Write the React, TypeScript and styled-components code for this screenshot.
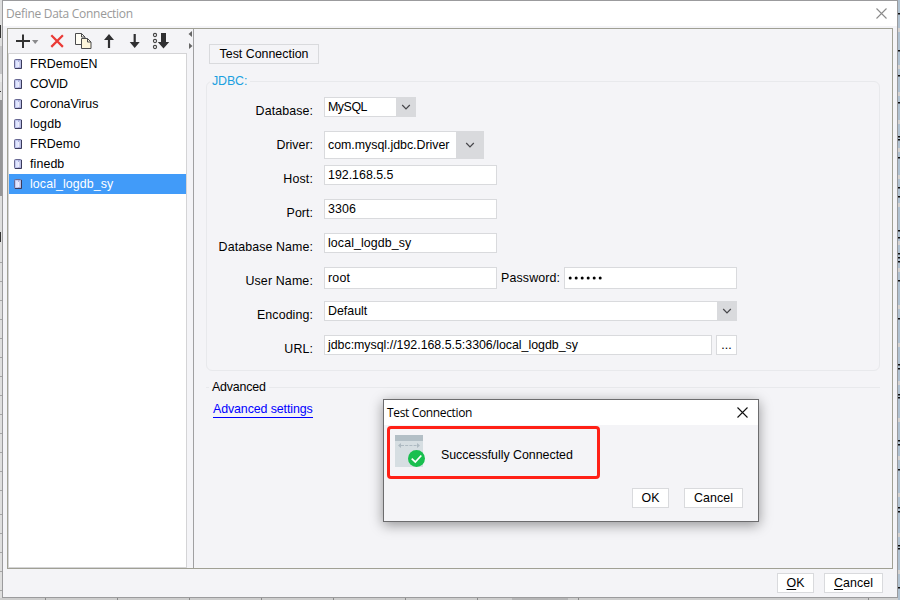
import React from "react";
import styled, { createGlobalStyle } from "styled-components";

const Global = createGlobalStyle`
  * { box-sizing: border-box; }
  body { margin: 0; overflow: hidden; background: #d2d2d2; }
  svg { display: block; flex: none; }
`;

const Desktop = styled.div`
  position: relative;
  width: 900px;
  height: 600px;
  overflow: hidden;
  padding: 0 2px 2px;
  background: #d0d0d0;
  font: 12.4px/20px "Liberation Sans", Arial, sans-serif;
  color: #000;
  white-space: nowrap;
`;

const Backdrop = styled.svg`
  position: absolute;
  left: 0;
  top: 0;
`;

const Window = styled.div`
  position: relative;
  display: flex;
  flex-direction: column;
  width: 896px;
  height: 598px;
  border: 1px solid #9b9b9d;
  background: #f4f4f7;
`;

const TitleBar = styled.div<{ $h: number; $muted?: boolean; $pad: string }>`
  display: flex;
  align-items: center;
  justify-content: space-between;
  flex: none;
  height: ${(p) => p.$h}px;
  padding: ${(p) => p.$pad};
  background: #fff;
  color: ${(p) => (p.$muted ? "#999" : "#000")};
  font-family: "Open Sans", sans-serif;
  font-size: 12px;
`;

const Txt = styled.span<{ $ls?: number }>`
  letter-spacing: ${(p) => p.$ls ?? 0}px;
`;

const Main = styled.div`
  display: flex;
  flex: none;
  width: 886px;
  height: 541px;
  margin: 2px 0 0 4px;
  border: 1px solid #a0a094;
`;

const Sidebar = styled.div`
  display: flex;
  flex-direction: column;
  width: 179px;
`;

const Toolbar = styled.div`
  flex: none;
  height: 24px;
`;

const List = styled.div`
  flex: 1;
  border: 1px solid #d4d4d6;
  background: #fff;
`;

const Item = styled.div<{ $selected?: boolean }>`
  display: flex;
  align-items: center;
  gap: 8px;
  height: 20px;
  padding-left: 5px;
  color: ${(p) => (p.$selected ? "#fff" : "#000")};
  background: ${(p) => (p.$selected ? "#419bf9" : "transparent")};
`;

const Splitter = styled.div`
  width: 7px;
  border-right: 1px solid #a0a0a2;
`;

const Content = styled.div`
  display: flex;
  flex-direction: column;
  align-items: flex-start;
  flex: 1;
  padding: 15px 0 0 12px;
`;

const Button = styled.button<{ $w: number; $plain?: boolean }>`
  flex: none;
  width: ${(p) => p.$w}px;
  height: 20px;
  margin: 0;
  padding: 0;
  border: 1px solid #d9dadd;
  background: ${(p) => (p.$plain ? "#f4f4f7" : "#fff")};
  font: inherit;
  line-height: 18px;
  color: #000;
`;

const TestButton = styled(Button)`
  margin-left: 3px;
`;

const Group = styled.fieldset`
  width: 674px;
  height: 299px;
  margin: 8px 0 0;
  padding: 0;
  min-width: 0;
  border: 1px solid #e8e9ec;
  border-radius: 6px;
`;

const Legend = styled.legend`
  height: 18px;
  margin: 0 0 0 3px;
  padding: 0 3px 0 2px;
  line-height: 18px;
  color: #1ba0e0;
`;

const Rows = styled.div`
  padding-top: 4px;
`;

const Row = styled.div`
  display: flex;
  height: 34px;
  align-items: flex-start;
`;

const Label = styled.label`
  width: 106px;
  margin-right: 11px;
  text-align: right;
  line-height: 34px;
`;

const Field = styled.div<{ $w: number; $h?: number }>`
  display: flex;
  justify-content: space-between;
  width: ${(p) => p.$w}px;
  height: ${(p) => p.$h ?? 20}px;
  margin-top: 3px;
  padding-left: 3px;
  border: 1px solid #d9dadd;
  background: #fff;
  line-height: ${(p) => (p.$h ?? 20) - 2}px;
`;

const DropButton = styled.div<{ $w: number }>`
  display: flex;
  align-items: center;
  justify-content: center;
  width: ${(p) => p.$w}px;
  background: #d9dadd;
`;

const PasswordLabel = styled.div`
  width: 67px;
  padding-left: 4px;
  margin-top: 3px;
  line-height: 22px;
`;

const Dots = styled.svg`
  margin-top: 8px;
`;

const MoreButton = styled(Button)`
  margin: 3px 0 0 4px;
`;

const Advanced = styled.div`
  display: flex;
  align-items: center;
  gap: 3px;
  width: 674px;
  height: 20px;
  margin-top: 6px;
`;

const Rule = styled.div<{ $w?: number }>`
  width: ${(p) => (p.$w ? `${p.$w}px` : "auto")};
  flex: ${(p) => (p.$w ? "none" : "1")};
  height: 1px;
  background: #e8e9ec;
`;

const Link = styled.a`
  margin: 3px 0 0 7px;
  height: 18px;
  line-height: 18px;
  color: #0000ff;
  border-bottom: 1px solid #0000ff;
`;

const Footer = styled.div`
  display: flex;
  justify-content: flex-end;
  gap: 10px;
  padding: 4px 14px 0 0;
`;

const Mnemonic = styled.span`
  text-decoration: underline;
  text-underline-offset: 2px;
  text-decoration-thickness: 1px;
`;

const Dialog = styled.div`
  position: absolute;
  left: 383px;
  top: 399px;
  display: flex;
  flex-direction: column;
  width: 376px;
  height: 123px;
  border: 1px solid #6c6c6e;
  background: #f4f4f7;
  box-shadow: 0 3px 12px rgba(0, 0, 0, 0.4);
`;

const Message = styled.div`
  display: flex;
  flex: none;
  align-items: flex-start;
  gap: 16px;
  width: 213px;
  height: 53px;
  margin: 1px 0 0 3px;
  padding: 6px 0 0 5px;
  border: 3px solid #ff2016;
  border-radius: 4px;
`;

const MessageText = styled(Txt)`
  margin-top: 10px;
`;

const DialogActions = styled.div`
  display: flex;
  justify-content: flex-end;
  gap: 15px;
  padding: 9px 15px 0 0;
`;

const CloseIcon = ({ color }: { color: string }) => (
  <svg width="11" height="11" viewBox="0 0 11 11">
    <path d="M.5 .5l10 10M10.5 .5l-10 10" stroke={color} strokeWidth="1.1" />
  </svg>
);

const Chevron = () => (
  <svg width="10" height="6" viewBox="0 0 10 6">
    <path d="M1.200 1l3.800 3.800L8.800 1" fill="none" stroke="#46464a" strokeWidth="1.2" />
  </svg>
);

const TableIcon = () => (
  <svg width="8" height="10" viewBox="0 0 8 10">
    <rect x=".5" y=".5" width="7" height="9" rx="1" fill="#a9aedb" stroke="#6a6a94" />
    <path d="M1.500 1.500h2.500v7h-2.500z" fill="#dfe5ff" />
    <path d="M5 3h1.500M5 5h1.500M5 7h1.500M4.500 3v5" stroke="#eef" />
    <path d="M7.500 1v8.500H1" fill="none" stroke="#3a3a5c" />
  </svg>
);

const ToolbarIcons = () => (
  <svg width="179" height="24" viewBox="8 29 179 24">
    <path d="M16 41h14M23 34.500v13.500" stroke="#333" strokeWidth="2" />
    <path d="M32 40h6.400l-3.200 4z" fill="#8a8a8c" />
    <path d="M51.300 35.300l11.600 11.600M62.900 35.300L51.300 46.900" stroke="#ea3a36" strokeWidth="2.200" />
    <g fill="#fff" stroke="#4b4b4d">
      <path d="M75.500 33.500h6l3.500 3.500v7.500h-9.500z" fill="#fffdf4" />
      <path d="M81.500 38.500h6l3.500 3.500v6.500h-9.500z" fill="#fdf5da" />
      <path d="M81.500 33.500v3.500h3.500M87.500 38.500v3.500h3.500" fill="none" />
    </g>
    <path d="M109 34l5 6h-3.900v8h-2.200v-8h-3.900z" fill="#303032" />
    <path d="M134.700 48l5-6h-3.900v-8h-2.200v8h-3.900z" fill="#303032" />
    <g fill="none" stroke="#444" strokeWidth="1.100">
      <circle cx="155" cy="35" r="1.600" />
      <circle cx="155" cy="41" r="1.600" />
      <circle cx="155" cy="47" r="1.600" />
    </g>
    <path d="M161 33h5v9h3.200l-5.700 6.500-5.700-6.500h3.200z" fill="#303032" />
  </svg>
);

const SplitArrows = () => (
  <svg width="6" height="24" viewBox="187 29 6 24">
    <path d="M192 31v6l-3.500-3z" fill="#666" />
    <path d="M189 43v6l3.500-3z" fill="#666" />
  </svg>
);

const SuccessIcon = () => (
  <svg width="30" height="33" viewBox="395 435 30 33">
    <path d="M395 435h28v32h-28z" fill="#d6dee2" />
    <path d="M395 435h28v6h-28z" fill="#b3bfc6" />
    <path d="M401 445.500h16" stroke="#aebac2" strokeDasharray="3 1.200" />
    <path d="M401 443v5l-3-2.500zM417 443v5l3-2.500z" fill="#aebac2" />
    <circle cx="416.500" cy="458.500" r="8.500" fill="#19bf4f" />
    <path d="M411.700 458.700l3.600 3.300 6-6.500" fill="none" stroke="#fff" strokeWidth="1.700" />
  </svg>
);

const bands = [30, 67, 94, 122, 150, 177, 205, 243, 270, 307, 345, 383, 420, 458, 495, 535, 572];
const marks = [13, 50, 75, 102, 136, 139, 157, 187, 196, 230, 237, 253, 257, 261, 280, 318, 364, 368, 394, 397, 440, 444, 469, 507, 511, 545, 548, 587];

const DesktopEdges = () => (
  <Backdrop width="900" height="600">
    <path d="M0 0h2v600H0z" fill="#dedede" />
    <path d="M0 46h2v28H0z" fill="#c5c5c7" />
    <path d="M0 74h2v8H0z" fill="#e8e8e8" />
    <path d="M0 100h2v96H0z" fill="#959597" />
    <path d="M0 25h1v13H0zM0 91h1v1H0zM0 232h1v10H0z" fill="#333" />
    {[262, 281, 300, 319, 338, 357, 376, 395, 414, 433, 452, 471, 490, 514, 533, 552, 571, 590].map((y) => (
      <path key={y} d={`M0 ${y}h2v1h-2z`} fill="#a5a5a5" />
    ))}
    <path d="M898 0h2v600h-2z" fill="#b0c1d0" />
    {bands.map((y) => (
      <path key={y} d={`M898 ${y - 2}h2v4h-2z`} fill="#d6d3d1" />
    ))}
    {marks.map((y) => (
      <path key={y} d={`M898 ${y}h2v1.500h-2z`} fill="#111" />
    ))}
    <path d="M0 598h868v2H0z" fill="#cdcdcd" />
    <path d="M512 598h56v2h-56z" fill="#b5b5b6" />
    {[45, 117, 189, 261, 333, 405, 477, 578, 868].map((x) => (
      <path key={x} d={`M${x} 598h1v2h-1z`} fill="#8b8b8b" />
    ))}
  </Backdrop>
);

const connections: [string, number][] = [
  ["FRDemoEN", 0.1],
  ["COVID", -0.3],
  ["CoronaVirus", -0.03],
  ["logdb", 0.2],
  ["FRDemo", 0.1],
  ["finedb", 0.1],
  ["local_logdb_sy", 0.1],
];

type RowProps = {
  label: string;
  ls: number;
  value: string;
  vls: number;
  w?: number;
  h?: number;
  drop?: number;
  children?: React.ReactNode;
};

const FormRow = ({ label, ls, value, vls, w = 173, h, drop, children }: RowProps) => (
  <Row>
    <Label>
      <Txt $ls={ls}>{label}</Txt>
    </Label>
    <Field $w={w} $h={h}>
      <Txt $ls={vls}>{value}</Txt>
      {drop && (
        <DropButton $w={drop}>
          <Chevron />
        </DropButton>
      )}
    </Field>
    {children}
  </Row>
);

export default function App() {
  return (
    <Desktop>
      <Global />
      <DesktopEdges />
      <Window>
        <TitleBar $h={25} $muted $pad="0 10px 0 3px">
          <Txt $ls={-0.28}>Define Data Connection</Txt>
          <CloseIcon color="#8b8b8b" />
        </TitleBar>
        <Main>
          <Sidebar>
            <Toolbar>
              <ToolbarIcons />
            </Toolbar>
            <List>
              {connections.map(([name, ls], i) => (
                <Item key={name} $selected={i === 6}>
                  <TableIcon />
                  <Txt $ls={ls}>{name}</Txt>
                </Item>
              ))}
            </List>
          </Sidebar>
          <Splitter>
            <SplitArrows />
          </Splitter>
          <Content>
            <TestButton $w={110} $plain>
              <Txt $ls={0}>Test Connection</Txt>
            </TestButton>
            <Group>
              <Legend>
                <Txt $ls={-0.1}>JDBC:</Txt>
              </Legend>
              <Rows>
                <FormRow label="Database:" ls={0.1} value="MySQL" vls={-0.45} w={92} drop={19} />
                <FormRow label="Driver:" ls={0} value="com.mysql.jdbc.Driver" vls={-0.02} w={160} h={28} drop={27} />
                <FormRow label="Host:" ls={0.15} value="192.168.5.5" vls={0} />
                <FormRow label="Port:" ls={0.05} value="3306" vls={0.15} />
                <FormRow label="Database Name:" ls={0.1} value="local_logdb_sy" vls={0.1} />
                <FormRow label="User Name:" ls={0.15} value="root" vls={0.2} h={22}>
                  <PasswordLabel>
                    <Txt $ls={0.15}>Password:</Txt>
                  </PasswordLabel>
                  <Field $w={173} $h={22}>
                    <Dots width="36" height="4">
                      {[0, 1, 2, 3, 4, 5].map((i) => (
                        <circle key={i} cx={2.2 + i * 6} cy="2" r="1.500" />
                      ))}
                    </Dots>
                  </Field>
                </FormRow>
                <FormRow label="Encoding:" ls={0.1} value="Default" vls={0} w={413} drop={19} />
                <FormRow label="URL:" ls={0.1} value="jdbc:mysql://192.168.5.5:3306/local_logdb_sy" vls={-0.02} w={388}>
                  <MoreButton $w={21}>...</MoreButton>
                </FormRow>
              </Rows>
            </Group>
            <Advanced>
              <Rule $w={3} />
              <Txt $ls={-0.17}>Advanced</Txt>
              <Rule />
            </Advanced>
            <Link>
              <Txt $ls={-0.1}>Advanced settings</Txt>
            </Link>
          </Content>
        </Main>
        <Footer>
          <Button $w={37}>
            <Mnemonic>O</Mnemonic>K
          </Button>
          <Button $w={59}>
            <Txt $ls={0.05}>
              <Mnemonic>C</Mnemonic>ancel
            </Txt>
          </Button>
        </Footer>
      </Window>
      <Dialog>
        <TitleBar $h={25} $pad="0 10px 0 3px">
          <Txt $ls={-0.35}>Test Connection</Txt>
          <CloseIcon color="#111" />
        </TitleBar>
        <Message>
          <SuccessIcon />
          <MessageText $ls={-0.02}>Successfully Connected</MessageText>
        </Message>
        <DialogActions>
          <Button $w={37}>OK</Button>
          <Button $w={59}>
            <Txt $ls={0.05}>Cancel</Txt>
          </Button>
        </DialogActions>
      </Dialog>
    </Desktop>
  );
}
